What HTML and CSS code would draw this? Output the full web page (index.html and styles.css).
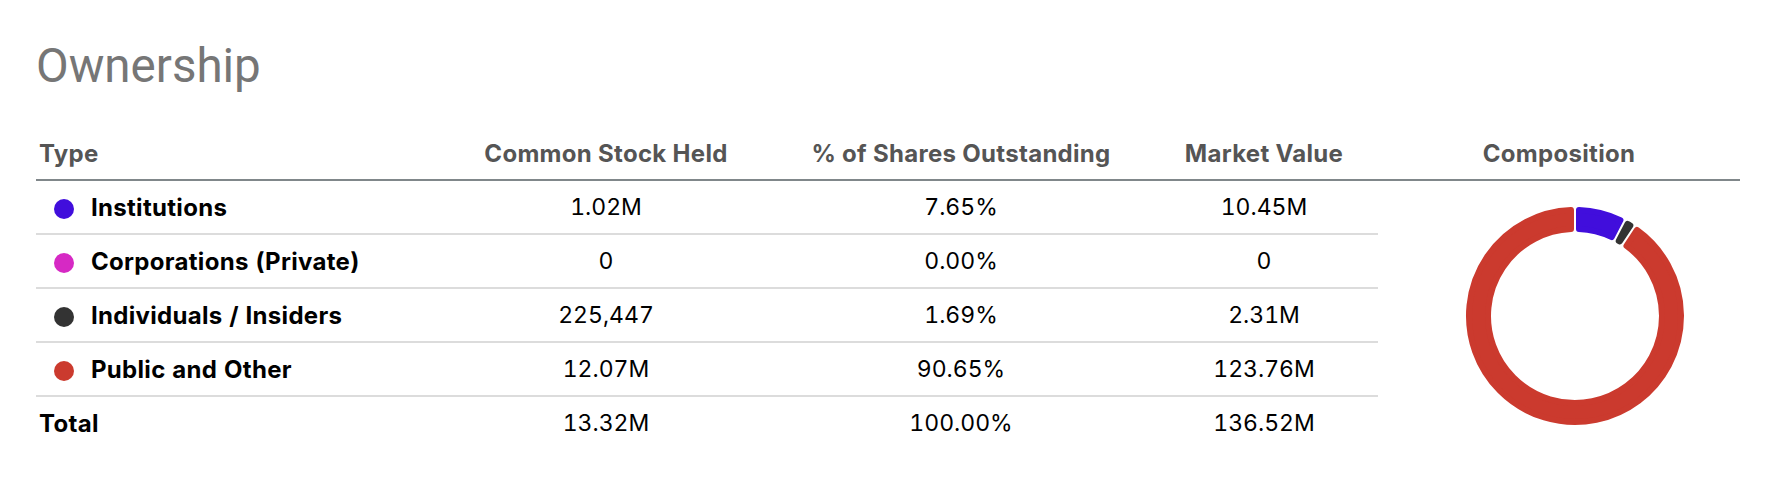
FILE: index.html
```html
<!DOCTYPE html>
<html lang="en">
<head>
<meta charset="utf-8">
<title>Ownership</title>
<link rel="stylesheet" href="styles.css">
</head>
<body>
<section class="ownership">
  <h1 class="title">Ownership</h1>
  <div class="table">
    <div class="th th-left">Type</div>
    <div class="th">Common Stock Held</div>
    <div class="th">% of Shares Outstanding</div>
    <div class="th">Market Value</div>
    <div class="th">Composition</div>

    <div class="td td-left"><span class="dot dot-inst"></span><span class="label">Institutions</span></div>
    <div class="td">1.02M</div>
    <div class="td">7.65%</div>
    <div class="td">10.45M</div>

    <div class="chart">
      <svg class="donut" width="240" height="240" viewBox="0 0 240 240">
        <path class="seg seg-public" d="M181.98,34.01 A106,106 0 1 1 116,14.075 L116,33.09 A87,87 0 1 0 171.45,49.84 Z"/>
        <path class="seg seg-inst" d="M124,14.075 A106,106 0 0 1 165.43,24.23 L156.64,41.09 A87,87 0 0 0 124,33.09 Z"/>
        <path class="seg seg-ind" d="M172.52,27.93 A106,106 0 0 1 175.32,29.58 L164.79,45.41 A87,87 0 0 0 163.73,44.79 Z"/>
      </svg>
    </div>

    <div class="td td-left"><span class="dot dot-corp"></span><span class="label">Corporations (Private)</span></div>
    <div class="td">0</div>
    <div class="td">0.00%</div>
    <div class="td">0</div>

    <div class="td td-left"><span class="dot dot-ind"></span><span class="label">Individuals / Insiders</span></div>
    <div class="td">225,447</div>
    <div class="td">1.69%</div>
    <div class="td">2.31M</div>

    <div class="td td-left"><span class="dot dot-public"></span><span class="label">Public and Other</span></div>
    <div class="td">12.07M</div>
    <div class="td">90.65%</div>
    <div class="td">123.76M</div>

    <div class="td td-left td-total"><span class="label">Total</span></div>
    <div class="td td-total">13.32M</div>
    <div class="td td-total">100.00%</div>
    <div class="td td-total">136.52M</div>
  </div>
</section>
</body>
</html>
```

FILE: styles.css
```css
html, body {
  margin: 0;
  padding: 0;
  background: #ffffff;
}

.ownership {
  padding: 38px 38px 0 36px;
  font-family: Inter, "Liberation Sans", sans-serif;
  color: #000;
}

.title {
  margin: 0 0 33px 0;
  font-family: Roboto, "Liberation Sans", sans-serif;
  font-weight: 400;
  font-size: 47.5px;
  line-height: 56px;
  color: #767676;
}

.table {
  display: grid;
  grid-template-columns: 404px 332px 378px 228px 362px;
  grid-template-rows: 54px repeat(4, 54px) 52px;
}

.th {
  box-sizing: border-box;
  height: 54px;
  border-bottom: 2px solid #80878a;
  display: flex;
  align-items: center;
  justify-content: center;
  font-size: 24px;
  letter-spacing: 0.3px;
  font-weight: 700;
  color: #555555;
}

.th-left {
  justify-content: flex-start;
  padding-left: 3px;
}

.td {
  box-sizing: border-box;
  height: 54px;
  border-bottom: 2px solid #dcdcdc;
  display: flex;
  align-items: center;
  justify-content: center;
  font-size: 23px;
  font-weight: 400;
  font-variant-numeric: tabular-nums;
}

.td-left {
  justify-content: flex-start;
  padding-left: 18px;
}

.td-total {
  height: 52px;
  border-bottom: none;
}

.td-left.td-total {
  padding-left: 3px;
}

.label {
  font-weight: 700;
  font-size: 24px;
  letter-spacing: 0.3px;
}

.dot {
  width: 20px;
  height: 20px;
  border-radius: 50%;
  margin: 4px 17px 0 0;
  flex: none;
}

.dot-inst { background: #410edc; }
.dot-corp { background: #d629c4; }
.dot-ind { background: #333333; }
.dot-public { background: #cb3a2e; }

.chart {
  grid-column: 5;
  grid-row: 2 / span 5;
  display: flex;
  align-items: center;
  justify-content: center;
  padding: 2px 0 0 32px;
}

.donut {
  display: block;
}

.seg {
  stroke-width: 6;
  stroke-linejoin: round;
}

.seg-inst { fill: #410edc; stroke: #410edc; }
.seg-ind { fill: #333333; stroke: #333333; }
.seg-public { fill: #cb3a2e; stroke: #cb3a2e; }
```
